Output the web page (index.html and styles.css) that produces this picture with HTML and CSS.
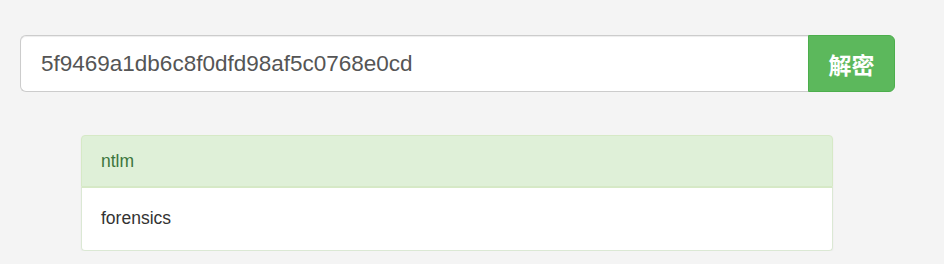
FILE: index.html
```html
<!DOCTYPE html>
<html>
<head>
<meta charset="utf-8">
<link rel="stylesheet" href="styles.css">
</head>
<body>
<div class="page">
  <div class="input-group">
    <input class="hash" type="text" value="5f9469a1db6c8f0dfd98af5c0768e0cd">
    <button class="btn">解密</button>
  </div>
  <ul class="list-group">
    <li class="item item-success">ntlm</li>
    <li class="item item-plain">forensics</li>
  </ul>
</div>
</body>
</html>
```
FILE: styles.css
```css
html, body {
  margin: 0;
  padding: 0;
  background: #f4f4f4;
  font-family: "Liberation Sans", Arial, "Noto Sans CJK SC", sans-serif;
}
.page {
  padding: 35px 49px 0 20px;
}
.input-group {
  display: flex;
  height: 57px;
}
.hash {
  flex: 1;
  box-sizing: border-box;
  height: 57px;
  margin: 0;
  border: 1px solid #cccccc;
  border-right: none;
  border-radius: 6px 0 0 6px;
  background: #ffffff;
  padding: 0 20px;
  font-family: "Liberation Sans", Arial, sans-serif;
  font-size: 22.5px;
  color: #555555;
  outline: none;
  box-shadow: inset 0 1px 1px rgba(0,0,0,0.075);
}
.btn {
  width: 87px;
  height: 57px;
  box-sizing: border-box;
  margin: 0;
  border: 1px solid #4cae4c;
  border-radius: 0 6px 6px 0;
  background: #5cb85c;
  color: #ffffff;
  font-family: "Noto Sans CJK SC", sans-serif;
  font-weight: bold;
  font-size: 23px;
  padding: 0;
}
.list-group {
  list-style: none;
  margin: 43px 62px 0 61px;
  padding: 0;
  border-radius: 4px;
  box-shadow: 0 1px 2px rgba(0,0,0,0.05);
}
.item {
  box-sizing: border-box;
  font-size: 17.5px;
  padding: 0 19px;
  display: flex;
  align-items: center;
}
.item-success {
  height: 52px;
  background: #dff0d8;
  color: #3c763d;
  border: 1px solid #d6e9c6;
  border-radius: 4px 4px 0 0;
}
.item-plain {
  height: 64px;
  background: #ffffff;
  color: #333333;
  border: 1px solid #dbe8d4;
  border-top: 1px solid #d6e9c6;
  border-radius: 0 0 4px 4px;
  padding-bottom: 1px;
}
```
